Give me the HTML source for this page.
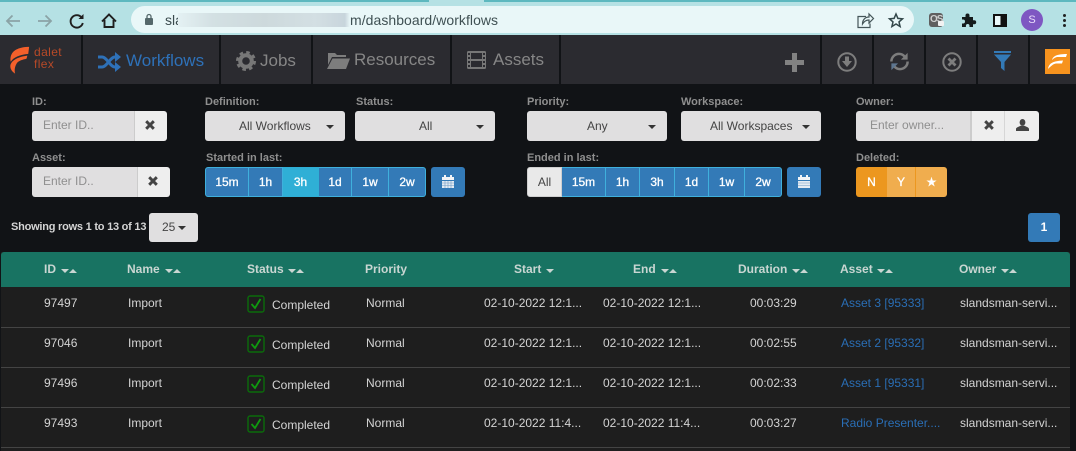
<!DOCTYPE html>
<html><head><meta charset="utf-8"><style>
html,body{margin:0;padding:0;background:#111316;width:1076px;height:451px;overflow:hidden}
body{position:relative;font-family:"Liberation Sans",sans-serif}
div,svg{position:absolute}
.t{white-space:nowrap;line-height:14px}
.lab{font-size:11px;font-weight:bold;color:#8f8f8f;white-space:nowrap;line-height:13px}
.sep{top:35px;width:2px;height:49px;background:#111316}
.nav{font-size:17px;color:#868686;white-space:nowrap;line-height:20px;top:51px}
.inp{background:#e0dfe0;border-radius:3px 0 0 3px;height:30px;font-size:12px;color:#8f8f8f;line-height:28px;box-sizing:border-box}
.addon{background:#eeeeee;height:30px;box-sizing:border-box}
.sel{background:#e0dfe0;border-radius:3px;height:30px;font-size:12px;color:#444;line-height:31px;box-sizing:border-box}
.sel span{position:absolute;white-space:nowrap}
.car{width:0;height:0;border-left:4px solid transparent;border-right:4px solid transparent;border-top:4px solid #333}
.g{height:30px;background:#337ab7;color:#fff;font-size:12px;-webkit-text-stroke:.3px #fff;text-align:center;line-height:28px;box-sizing:border-box;border-top:1px solid #3fb0dc;border-bottom:1px solid #3fb0dc;border-right:1px solid #3fb0dc}
.h{top:262px;font-size:12px;font-weight:bold;color:#c9d6d2;white-space:nowrap;line-height:14px}
.c{font-size:12px;color:#d4d4d4;white-space:nowrap;line-height:14px}
.l{font-size:12px;color:#2a6eb5;white-space:nowrap;line-height:14px}
.sd{width:0;height:0;border-left:4px solid transparent;border-right:4px solid transparent;border-top:4px solid #c9d6d2;top:269px}
.su{width:0;height:0;border-left:4px solid transparent;border-right:4px solid transparent;border-bottom:4px solid #c9d6d2;top:269px}
</style></head><body>
<!-- browser chrome -->
<div style="left:0;top:0;width:1076px;height:35px;background:#b5e1e4"></div>
<div style="left:0;top:0;width:429px;height:2px;background:#5db8bf"></div>
<div style="left:484px;top:0;width:592px;height:2px;background:#5db8bf"></div>
<div style="left:131px;top:6px;width:783px;height:27px;background:#e9f7f8;border-radius:14px"></div>
<svg style="left:0;top:6px" width="130" height="28" viewBox="0 0 130 28" fill="none">
<path d="M20 15H7M12.500 9.500L7 15l5.500 5.500" stroke="#8ba3a6" stroke-width="1.800"/>
<path d="M38 15H51M45.500 9.500L51 15 45.500 20.500" stroke="#8ba3a6" stroke-width="1.800"/>
<path d="M82 12a6.200 6.200 0 1 0 .8 5" stroke="#1f1f1f" stroke-width="1.900"/>
<path d="M83.500 8v5h-5z" fill="#1f1f1f"/>
<path d="M102 15.500l7-7 7 7M104.500 14v7h9v-7" stroke="#1f1f1f" stroke-width="1.900"/>
</svg>
<svg style="left:144px;top:13px" width="10" height="13" viewBox="0 0 10 13"><rect x="1" y="5" width="8" height="7" rx="1" fill="#55686b"/><path d="M3 5V3.500a2 2 0 0 1 4 0V5" stroke="#55686b" stroke-width="1.300" fill="none"/></svg>
<div class="t" style="left:165px;top:13px;font-size:14px;color:#3a4a4d;line-height:15px">sla</div>
<div style="left:178px;top:13px;width:172px;height:14px;background:linear-gradient(90deg,#e4f1f3,#d3e0e3 20%,#cdd9dc 50%,#d3dfe3 80%,#c8d5dc 97%,#e9f7f8)"></div>
<div class="t" style="left:350px;top:13px;font-size:14px;color:#3f5053;line-height:15px;letter-spacing:.05px">m/dashboard/workflows</div>
<svg style="left:856px;top:11px" width="50" height="20" viewBox="0 0 50 20" fill="none" stroke="#445558" stroke-width="1.200">
<path d="M10 5.500H2v11h12v-4"/><path d="M6.500 13c0-4.500 3-7 6.500-7V3l4.500 4.500L13 12V9c-3 0-5 1.500-6.500 4z"/>
<path d="M40 3l1.900 4.400 4.600.4-3.500 3.100 1.100 4.600-4.100-2.500-4.100 2.500 1.100-4.600-3.500-3.100 4.600-.4z" stroke-width="1.500" stroke="#33474a"/>
</svg>
<div style="left:929px;top:13px;width:14px;height:14px;background:#5f5f5f;border-radius:3px"></div>
<div class="t" style="left:930px;top:13px;font-size:10px;font-weight:bold;color:#cfd0d0;letter-spacing:-1px">OS</div>
<div style="left:938px;top:21px;width:6px;height:5px;background:#f2f2f2;border-radius:1px"></div>
<svg style="left:961px;top:12px" width="16" height="16" viewBox="0 0 16 16"><path d="M1 5h3.500V3.500a2 2 0 0 1 4 0V5H12v3.200h1.200a2 2 0 0 1 0 4H12V15H8.500v-1.200a1.800 1.800 0 0 0-3.600 0V15H1v-3.500h1a2 2 0 0 0 0-4H1z" fill="#151b1c"/></svg>
<div style="left:993px;top:14px;width:10px;height:9px;border:2px solid #111;background:linear-gradient(90deg,#e9f7f8 55%,#111 55%)"></div>
<div style="left:1021px;top:9px;width:22px;height:22px;border-radius:50%;background:#7e57c2;color:#e9defc;font-size:11px;text-align:center;line-height:22px">S</div>
<div style="left:1063px;top:14px;width:3px;height:3px;border-radius:50%;background:#222"></div>
<div style="left:1063px;top:19px;width:3px;height:3px;border-radius:50%;background:#222"></div>
<div style="left:1063px;top:24px;width:3px;height:3px;border-radius:50%;background:#222"></div>
<!-- navbar -->
<div style="left:0;top:35px;width:1076px;height:49px;background:#2b2b30"></div>
<div class="sep" style="left:81px"></div><div class="sep" style="left:219px"></div><div class="sep" style="left:311px"></div><div class="sep" style="left:450px"></div><div class="sep" style="left:559px"></div>
<div class="sep" style="left:820px"></div><div class="sep" style="left:872px"></div><div class="sep" style="left:924px"></div><div class="sep" style="left:976px"></div><div class="sep" style="left:1028px"></div>
<svg style="left:9px;top:45px" width="21" height="30" viewBox="0 0 24 32" fill="#f4602b"><path d="M23 1C13 1 4 4 2 12c-.5 2-.5 4 0 6 3-5 10-8 20-9z"/><path d="M21 11C12 12 2 16 1.500 23c0 3 1.500 6 5.500 8.500-1-4-.5-8 2-12 2-3 7-4 11-5z"/></svg>
<div class="t" style="left:34px;top:46px;font-size:12px;color:#b84a28;line-height:13px;letter-spacing:.4px">dalet</div>
<div class="t" style="left:34px;top:58px;font-size:12px;color:#b84a28;line-height:13px;letter-spacing:.4px">flex</div>
<svg style="left:98px;top:52px" width="24" height="20" viewBox="0 0 24 20" fill="none" stroke="#2e71b8"><path d="M0 5h4c5 0 8 10 13 10h2" stroke-width="3"/><path d="M0 15h4c5 0 8-10 13-10h2" stroke-width="3"/><path d="M17 0l6 5-6 5zM17 10l6 5-6 5z" fill="#2e71b8" stroke="none"/></svg>
<div class="nav" style="left:126px;color:#2e71b8">Workflows</div>
<svg style="left:236px;top:51px" width="20" height="20" viewBox="0 0 20 20" fill="none"><circle cx="10" cy="10" r="5.800" stroke="#777" stroke-width="4"/><circle cx="10" cy="10" r="8.500" stroke="#777" stroke-width="3" stroke-dasharray="3.500 3.170"/></svg>
<div class="nav" style="left:260px">Jobs</div>
<svg style="left:327px;top:52px" width="23" height="17" viewBox="0 0 23 17" fill="#7d7d7d"><path d="M1 1h7l2 2h9v2H5L1 13z"/><path d="M5.500 6.500H23L19 17H0z"/></svg>
<div class="nav" style="left:354px;top:50px">Resources</div>
<svg style="left:467px;top:51px" width="19" height="18" viewBox="0 0 19 18"><rect width="19" height="18" rx="1.500" fill="#777"/><rect x="4" y="2" width="11" height="6" fill="#2b2b30"/><rect x="4" y="10" width="11" height="6" fill="#2b2b30"/><g fill="#2b2b30"><rect x="1" y="2" width="2" height="2"/><rect x="1" y="6" width="2" height="2"/><rect x="1" y="10" width="2" height="2"/><rect x="1" y="14" width="2" height="2"/><rect x="16" y="2" width="2" height="2"/><rect x="16" y="6" width="2" height="2"/><rect x="16" y="10" width="2" height="2"/><rect x="16" y="14" width="2" height="2"/></g></svg>
<div class="nav" style="left:493px;top:50px">Assets</div>
<svg style="left:785px;top:53px" width="19" height="19" viewBox="0 0 19 19" fill="#828282"><path d="M7 0h5v7h7v5h-7v7H7v-7H0V7h7z"/></svg>
<svg style="left:836px;top:51px" width="22" height="22" viewBox="0 0 22 22" fill="none"><circle cx="11" cy="11" r="8.700" stroke="#7d7d7d" stroke-width="2"/><path d="M9 5.500h4V10h3l-5 6-5-6h3z" fill="#7d7d7d"/></svg>
<svg style="left:889px;top:51px" width="21" height="21" viewBox="0 0 22 22" fill="none"><path d="M2.500 11c0-4.500 3.500-8 8-8 2.500 0 4.500 1 6 3" stroke="#7d7d7d" stroke-width="2.600"/><path d="M19.500 2v7h-7z" fill="#7d7d7d"/><path d="M19.500 11c0 4.500-3.500 8-8 8-2.500 0-4.500-1-6-3" stroke="#7d7d7d" stroke-width="2.600"/><path d="M2.500 20v-7h7z" fill="#5e7690"/></svg>
<svg style="left:941px;top:51px" width="22" height="22" viewBox="0 0 22 22" fill="none"><circle cx="11" cy="11" r="8.700" stroke="#7d7d7d" stroke-width="2"/><path d="M7.500 7.500l7 7M14.500 7.500l-7 7" stroke="#7d7d7d" stroke-width="2.800"/></svg>
<svg style="left:994px;top:50px" width="18" height="22" viewBox="0 0 18 22"><rect x="0" y="1" width="17" height="2" fill="#337ab7"/><path d="M0 4.500h17L10.500 12v9l-3.500-3v-6z" fill="#337ab7"/></svg>
<div style="left:1045px;top:49px;width:25px;height:25px;background:#f7931e"></div>
<svg style="left:1045px;top:49px" width="25" height="25" viewBox="0 0 25 25" fill="#fff"><path d="M7 11C8 7 12 5 22 5l-1 3H12C10 8.500 8.500 9.500 7 11z"/><path d="M3 20c1-6 5-8 15-8.500L17 14.500H11C8 15 6 17 3 20z"/></svg>
<!-- labels -->
<div class="lab" style="left:32px;top:96px">ID:</div>
<div class="lab" style="left:205px;top:96px">Definition:</div>
<div class="lab" style="left:356px;top:96px">Status:</div>
<div class="lab" style="left:527px;top:96px">Priority:</div>
<div class="lab" style="left:681px;top:96px">Workspace:</div>
<div class="lab" style="left:856px;top:96px">Owner:</div>
<div class="lab" style="left:32px;top:152px">Asset:</div>
<div class="lab" style="left:206px;top:152px">Started in last:</div>
<div class="lab" style="left:527px;top:152px">Ended in last:</div>
<div class="lab" style="left:856px;top:152px">Deleted:</div>
<!-- ID -->
<div class="inp" style="left:32px;top:111px;width:102px;padding-left:11px">Enter ID..</div>
<div class="addon" style="left:134px;top:111px;width:33px;border-radius:0 3px 3px 0;border-left:1px solid #ccc"></div>
<!-- Asset -->
<div class="inp" style="left:32px;top:167px;width:105px;padding-left:11px">Enter ID..</div>
<div class="addon" style="left:137px;top:167px;width:33px;border-radius:0 3px 3px 0;border-left:1px solid #ccc"></div>
<!-- selects -->
<div class="sel" style="left:205px;top:111px;width:140px"><span style="left:34px">All Workflows</span></div>
<div class="car" style="left:326px;top:125px"></div>
<div class="sel" style="left:355px;top:111px;width:140px"><span style="left:64px">All</span></div>
<div class="car" style="left:476px;top:125px"></div>
<div class="sel" style="left:527px;top:111px;width:140px"><span style="left:60px">Any</span></div>
<div class="car" style="left:648px;top:125px"></div>
<div class="sel" style="left:681px;top:111px;width:140px"><span style="left:29px">All Workspaces</span></div>
<div class="car" style="left:802px;top:125px"></div>
<!-- owner -->
<div class="inp" style="left:856px;top:111px;width:116px;padding-left:14px;border-right:2px solid #ccc">Enter owner...</div>
<div class="addon" style="left:972px;top:111px;width:33px;border-right:1px solid #d6d6d6"></div>
<div class="addon" style="left:1005px;top:111px;width:34px;border-radius:0 3px 3px 0"></div>
<svg style="left:1016px;top:119px" width="13" height="12" viewBox="0 0 13 12" fill="#444"><ellipse cx="6.500" cy="3.400" rx="2.900" ry="3.400"/><path d="M0 12v-2c0-1.600 2.500-2 4.500-3.200h4C10.500 8 13 8.400 13 10v2z"/></svg>
<!-- x icons -->
<svg style="left:145px;top:120px" width="10" height="10" viewBox="0 0 10 10"><path d="M1.200 1.200l7.600 7.600M8.800 1.200L1.200 8.800" stroke="#444" stroke-width="2.900"/></svg>
<svg style="left:148px;top:176px" width="10" height="10" viewBox="0 0 10 10"><path d="M1.200 1.200l7.600 7.600M8.800 1.200L1.200 8.800" stroke="#444" stroke-width="2.900"/></svg>
<svg style="left:984px;top:120px" width="10" height="10" viewBox="0 0 10 10"><path d="M1.200 1.200l7.600 7.600M8.800 1.200L1.200 8.800" stroke="#444" stroke-width="2.900"/></svg>
<!-- started group -->
<div class="g" style="left:205px;top:167px;width:44px;border-left:1px solid #3fb0dc;border-radius:3px 0 0 3px">15m</div>
<div class="g" style="left:249px;top:167px;width:34px">1h</div>
<div class="g" style="left:283px;top:167px;width:36px;background:#2fafd6;border-color:#2fafd6">3h</div>
<div class="g" style="left:319px;top:167px;width:33px">1d</div>
<div class="g" style="left:352px;top:167px;width:37px">1w</div>
<div class="g" style="left:389px;top:167px;width:37px;border-radius:0 3px 3px 0">2w</div>
<div style="left:431px;top:167px;width:34px;height:30px;background:#337ab7;border-radius:3px"></div>
<svg style="left:442px;top:175px" width="12" height="13" viewBox="0 0 12 13"><path d="M0 2h2V0h2v2h4V0h2v2h2v3H0z" fill="#f1f4f7"/><path d="M0 6h12v7H0z" fill="#e3ebf3"/><path d="M0 8h12M0 10.500h12M3 6v7M6 6v7M9 6v7" stroke="#6f9bc4" stroke-width=".6"/></svg>
<!-- ended group -->
<div class="g" style="left:527px;top:167px;width:35px;background:#e9e9e9;color:#444;-webkit-text-stroke:0;border:1px solid #cfcfcf;border-radius:3px 0 0 3px">All</div>
<div class="g" style="left:562px;top:167px;width:44px">15m</div>
<div class="g" style="left:606px;top:167px;width:34px">1h</div>
<div class="g" style="left:640px;top:167px;width:35px">3h</div>
<div class="g" style="left:675px;top:167px;width:34px">1d</div>
<div class="g" style="left:709px;top:167px;width:36px">1w</div>
<div class="g" style="left:745px;top:167px;width:37px;border-radius:0 3px 3px 0">2w</div>
<div style="left:787px;top:167px;width:34px;height:30px;background:#337ab7;border-radius:3px"></div>
<svg style="left:798px;top:175px" width="12" height="13" viewBox="0 0 12 13"><path d="M0 2h2V0h2v2h4V0h2v2h2v3H0z" fill="#f1f4f7"/><path d="M0 6h12v7H0z" fill="#e3ebf3"/><path d="M0 8h12M0 10.500h12" stroke="#6f9bc4" stroke-width=".6"/></svg>
<!-- deleted -->
<div class="g" style="left:856px;top:167px;width:31px;background:#ec971f;border:0;border-radius:3px 0 0 3px;line-height:30px">N</div>
<div class="g" style="left:887px;top:167px;width:29px;background:#f0ad4e;border:0;border-right:1px solid #ec971f;line-height:30px">Y</div>
<div class="g" style="left:916px;top:167px;width:31px;background:#f0ad4e;border:0;border-radius:0 3px 3px 0;line-height:30px">&#9733;</div>
<!-- pagination -->
<div class="t" style="left:11px;top:220px;font-size:11px;font-weight:bold;color:#d5d5d5;line-height:14px;letter-spacing:-.23px">Showing rows 1 to 13 of 13</div>
<div class="sel" style="left:149px;top:213px;width:49px;height:29px;line-height:28px"><span style="left:13px">25</span></div>
<div class="car" style="left:178px;top:226px"></div>
<div style="left:1028px;top:213px;width:32px;height:29px;background:#337ab7;border-radius:3px;color:#fff;font-size:12px;font-weight:bold;text-align:center;line-height:28px">1</div>
<!-- table -->
<div style="left:1px;top:252px;width:1069px;height:199px;background:#1e1e1e"></div>
<div style="left:1px;top:252px;width:1069px;height:35px;background:#187362;border-radius:3px 3px 0 0"></div>
<div class="h" style="left:44px">ID</div><div class="sd" style="left:61px"></div><div class="su" style="left:69px"></div>
<div class="h" style="left:127px">Name</div><div class="sd" style="left:165px"></div><div class="su" style="left:173px"></div>
<div class="h" style="left:247px">Status</div><div class="sd" style="left:288px"></div><div class="su" style="left:296px"></div>
<div class="h" style="left:365px">Priority</div>
<div class="h" style="left:514px">Start</div><div class="sd" style="left:546px"></div>
<div class="h" style="left:633px">End</div><div class="sd" style="left:661px"></div><div class="su" style="left:669px"></div>
<div class="h" style="left:738px">Duration</div><div class="sd" style="left:792px"></div><div class="su" style="left:800px"></div>
<div class="h" style="left:840px">Asset</div><div class="sd" style="left:877px"></div><div class="su" style="left:885px"></div>
<div class="h" style="left:959px">Owner</div><div class="sd" style="left:1001px"></div><div class="su" style="left:1009px"></div>
<div style="left:1px;top:327px;width:1069px;height:1px;background:#444"></div>
<div style="left:1px;top:367px;width:1069px;height:1px;background:#444"></div>
<div style="left:1px;top:407px;width:1069px;height:1px;background:#444"></div>
<div style="left:1px;top:447px;width:1069px;height:1px;background:#444"></div>
<!-- rows -->
<div class="c" style="left:44px;top:296px">97497</div><div class="c" style="left:128px;top:296px">Import</div><div class="c" style="left:272px;top:298px">Completed</div><div class="c" style="left:366px;top:296px">Normal</div><div class="c" style="left:484px;top:296px">02-10-2022 12:1...</div><div class="c" style="left:603px;top:296px">02-10-2022 12:1...</div><div class="c" style="left:750px;top:296px">00:03:29</div><div class="l" style="left:841px;top:296px">Asset 3 [95333]</div><div class="c" style="left:960px;top:296px">slandsman-servi...</div>
<div class="c" style="left:44px;top:336px">97046</div><div class="c" style="left:128px;top:336px">Import</div><div class="c" style="left:272px;top:338px">Completed</div><div class="c" style="left:366px;top:336px">Normal</div><div class="c" style="left:484px;top:336px">02-10-2022 12:1...</div><div class="c" style="left:603px;top:336px">02-10-2022 12:1...</div><div class="c" style="left:750px;top:336px">00:02:55</div><div class="l" style="left:841px;top:336px">Asset 2 [95332]</div><div class="c" style="left:960px;top:336px">slandsman-servi...</div>
<div class="c" style="left:44px;top:376px">97496</div><div class="c" style="left:128px;top:376px">Import</div><div class="c" style="left:272px;top:378px">Completed</div><div class="c" style="left:366px;top:376px">Normal</div><div class="c" style="left:484px;top:376px">02-10-2022 12:1...</div><div class="c" style="left:603px;top:376px">02-10-2022 12:1...</div><div class="c" style="left:750px;top:376px">00:02:33</div><div class="l" style="left:841px;top:376px">Asset 1 [95331]</div><div class="c" style="left:960px;top:376px">slandsman-servi...</div>
<div class="c" style="left:44px;top:416px">97493</div><div class="c" style="left:128px;top:416px">Import</div><div class="c" style="left:272px;top:418px">Completed</div><div class="c" style="left:366px;top:416px">Normal</div><div class="c" style="left:484px;top:416px">02-10-2022 11:4...</div><div class="c" style="left:603px;top:416px">02-10-2022 11:4...</div><div class="c" style="left:750px;top:416px">00:03:27</div><div class="l" style="left:841px;top:416px">Radio Presenter....</div><div class="c" style="left:960px;top:416px">slandsman-servi...</div>
<svg style="left:247px;top:295px" width="18" height="18" viewBox="0 0 18 18" fill="none"><rect x="1" y="1" width="16" height="16" rx="2" stroke="#0a6b0a" stroke-width="1.400"/><path d="M4.500 9l3.500 4 5.500-9" stroke="#0f9a0f" stroke-width="1.800"/></svg>
<svg style="left:247px;top:335px" width="18" height="18" viewBox="0 0 18 18" fill="none"><rect x="1" y="1" width="16" height="16" rx="2" stroke="#0a6b0a" stroke-width="1.400"/><path d="M4.500 9l3.500 4 5.500-9" stroke="#0f9a0f" stroke-width="1.800"/></svg>
<svg style="left:247px;top:375px" width="18" height="18" viewBox="0 0 18 18" fill="none"><rect x="1" y="1" width="16" height="16" rx="2" stroke="#0a6b0a" stroke-width="1.400"/><path d="M4.500 9l3.500 4 5.500-9" stroke="#0f9a0f" stroke-width="1.800"/></svg>
<svg style="left:247px;top:415px" width="18" height="18" viewBox="0 0 18 18" fill="none"><rect x="1" y="1" width="16" height="16" rx="2" stroke="#0a6b0a" stroke-width="1.400"/><path d="M4.500 9l3.500 4 5.500-9" stroke="#0f9a0f" stroke-width="1.800"/></svg>
</body></html>
